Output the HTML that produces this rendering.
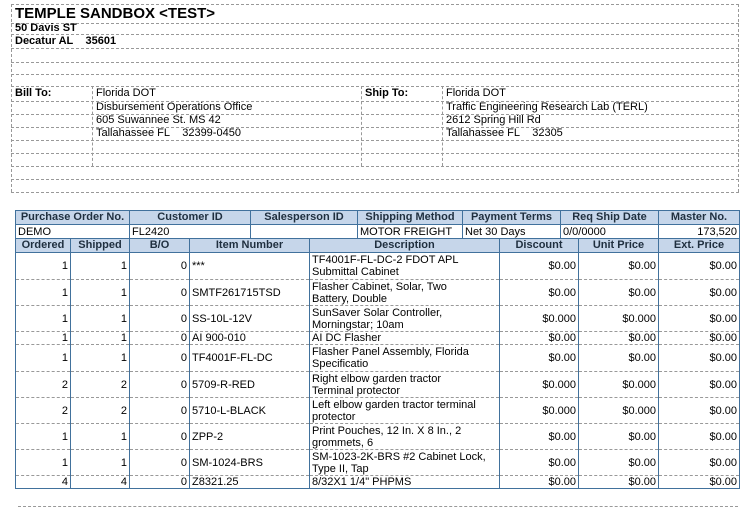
<!DOCTYPE html>
<html><head><style>
*{margin:0;padding:0;box-sizing:border-box}
body{width:743px;height:508px;background:#fff;font-family:"Liberation Sans",Tahoma,sans-serif;font-size:11px;color:#000;position:relative;overflow:hidden}
.a{position:absolute;white-space:nowrap;line-height:13px}
.h{position:absolute;border-top:1px dashed #999}
.v{position:absolute;border-left:1px dashed #999}
table{position:absolute;border-collapse:collapse;table-layout:fixed;left:15px;width:724px}
td{border:1px solid #41719c;padding:0 2px;line-height:12px;overflow:hidden;white-space:nowrap;vertical-align:middle}
.hd td{background:#c6d6ea;font-weight:bold;text-align:center;color:#1f2f3f;line-height:13px}
.r{text-align:right}
.it td{border-top:1px dashed #999;border-bottom:1px dashed #999;border-left:1.5px solid #41719c;border-right:1.5px solid #41719c}
.it:last-child td{border-bottom:1.5px solid #41719c}
</style></head><body>
<div class="v" style="left:11px;top:4px;height:188px"></div>
<div class="v" style="left:738px;top:4px;height:188px"></div>
<div class="h" style="left:11px;top:4px;width:728px"></div>
<div class="h" style="left:11px;top:23px;width:728px"></div>
<div class="h" style="left:11px;top:34px;width:728px"></div>
<div class="h" style="left:11px;top:48px;width:728px"></div>
<div class="h" style="left:11px;top:62px;width:728px"></div>
<div class="h" style="left:11px;top:74px;width:728px"></div>
<div class="h" style="left:11px;top:86px;width:728px"></div>
<div class="h" style="left:11px;top:101px;width:728px"></div>
<div class="h" style="left:11px;top:114px;width:728px"></div>
<div class="h" style="left:11px;top:127px;width:728px"></div>
<div class="h" style="left:11px;top:140px;width:728px"></div>
<div class="h" style="left:11px;top:153px;width:728px"></div>
<div class="h" style="left:11px;top:166px;width:728px"></div>
<div class="h" style="left:11px;top:179px;width:728px"></div>
<div class="h" style="left:11px;top:192px;width:728px"></div>
<div class="v" style="left:92px;top:86px;height:80px"></div>
<div class="v" style="left:361px;top:86px;height:80px"></div>
<div class="v" style="left:442px;top:86px;height:80px"></div>
<div class="a" style="left:15px;top:5px;font-size:15px;font-weight:bold;line-height:17px">TEMPLE SANDBOX &lt;TEST&gt;</div>
<div class="a" style="left:15px;top:22px;font-weight:bold">50 Davis ST</div>
<div class="a" style="left:15px;top:35px;font-weight:bold">Decatur AL&nbsp;&nbsp;&nbsp;&nbsp;35601</div>
<div class="a" style="left:15px;top:87px;font-weight:bold">Bill To:</div>
<div class="a" style="left:96px;top:87px">Florida DOT</div>
<div class="a" style="left:96px;top:101px">Disbursement Operations Office</div>
<div class="a" style="left:96px;top:114px">605 Suwannee St. MS 42</div>
<div class="a" style="left:96px;top:127px">Tallahassee FL&nbsp;&nbsp;&nbsp;&nbsp;32399-0450</div>
<div class="a" style="left:365px;top:87px;font-weight:bold">Ship To:</div>
<div class="a" style="left:446px;top:87px">Florida DOT</div>
<div class="a" style="left:446px;top:101px">Traffic Engineering Research Lab (TERL)</div>
<div class="a" style="left:446px;top:114px">2612 Spring Hill Rd</div>
<div class="a" style="left:446px;top:127px">Tallahassee FL&nbsp;&nbsp;&nbsp;&nbsp;32305</div>

<table style="top:210px">
<colgroup><col style="width:114px"><col style="width:121px"><col style="width:107px"><col style="width:105px"><col style="width:98px"><col style="width:98px"><col style="width:81px"></colgroup>
<tr class="hd" style="height:14px"><td>Purchase Order No.</td><td>Customer ID</td><td>Salesperson ID</td><td>Shipping Method</td><td>Payment Terms</td><td>Req Ship Date</td><td>Master No.</td></tr>
<tr style="height:14px"><td>DEMO</td><td>FL2420</td><td></td><td>MOTOR FREIGHT</td><td>Net 30 Days</td><td>0/0/0000</td><td class="r">173,520</td></tr>
</table>
<table style="top:238px">
<colgroup><col style="width:55px"><col style="width:59px"><col style="width:60px"><col style="width:120px"><col style="width:190px"><col style="width:79px"><col style="width:80px"><col style="width:81px"></colgroup>
<tr class="hd" style="height:14px"><td>Ordered</td><td>Shipped</td><td>B/O</td><td>Item Number</td><td>Description</td><td>Discount</td><td>Unit Price</td><td>Ext. Price</td></tr>
<tr class="it" style="height:27px"><td class="r">1</td><td class="r">1</td><td class="r">0</td><td>***</td><td>TF4001F-FL-DC-2 FDOT APL<br>Submittal Cabinet</td><td class="r">$0.00</td><td class="r">$0.00</td><td class="r">$0.00</td></tr>
<tr class="it" style="height:26px"><td class="r">1</td><td class="r">1</td><td class="r">0</td><td>SMTF261715TSD</td><td>Flasher Cabinet, Solar, Two<br>Battery, Double</td><td class="r">$0.00</td><td class="r">$0.00</td><td class="r">$0.00</td></tr>
<tr class="it" style="height:26px"><td class="r">1</td><td class="r">1</td><td class="r">0</td><td>SS-10L-12V</td><td>SunSaver Solar Controller,<br>Morningstar; 10am</td><td class="r">$0.000</td><td class="r">$0.000</td><td class="r">$0.00</td></tr>
<tr class="it" style="height:12px"><td class="r">1</td><td class="r">1</td><td class="r">0</td><td>AI 900-010</td><td>AI DC Flasher</td><td class="r">$0.00</td><td class="r">$0.00</td><td class="r">$0.00</td></tr>
<tr class="it" style="height:27px"><td class="r">1</td><td class="r">1</td><td class="r">0</td><td>TF4001F-FL-DC</td><td>Flasher Panel Assembly, Florida<br>Specificatio</td><td class="r">$0.00</td><td class="r">$0.00</td><td class="r">$0.00</td></tr>
<tr class="it" style="height:26px"><td class="r">2</td><td class="r">2</td><td class="r">0</td><td>5709-R-RED</td><td>Right elbow garden tractor<br>Terminal protector</td><td class="r">$0.000</td><td class="r">$0.000</td><td class="r">$0.00</td></tr>
<tr class="it" style="height:26px"><td class="r">2</td><td class="r">2</td><td class="r">0</td><td>5710-L-BLACK</td><td>Left elbow garden tractor terminal<br>protector</td><td class="r">$0.000</td><td class="r">$0.000</td><td class="r">$0.00</td></tr>
<tr class="it" style="height:26px"><td class="r">1</td><td class="r">1</td><td class="r">0</td><td>ZPP-2</td><td>Print Pouches, 12 In. X 8 In., 2<br>grommets, 6</td><td class="r">$0.00</td><td class="r">$0.00</td><td class="r">$0.00</td></tr>
<tr class="it" style="height:26px"><td class="r">1</td><td class="r">1</td><td class="r">0</td><td>SM-1024-BRS</td><td>SM-1023-2K-BRS #2 Cabinet Lock,<br>Type II, Tap</td><td class="r">$0.00</td><td class="r">$0.00</td><td class="r">$0.00</td></tr>
<tr class="it" style="height:12px"><td class="r">4</td><td class="r">4</td><td class="r">0</td><td>Z8321.25</td><td>8/32X1 1/4" PHPMS</td><td class="r">$0.00</td><td class="r">$0.00</td><td class="r">$0.00</td></tr>
</table>
<div class="h" style="left:18px;top:506px;width:720px"></div>
</body></html>
